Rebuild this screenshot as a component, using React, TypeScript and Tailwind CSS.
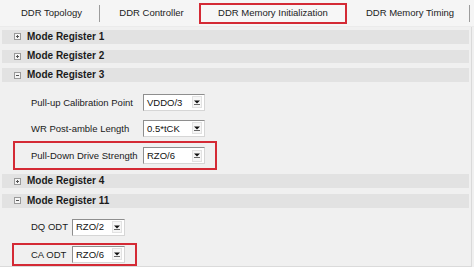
import React from "react";

const font = { fontFamily: '"Liberation Sans", Arial, sans-serif' };

const Expander = ({ open }: { open: boolean }) => (
  <svg width="7" height="7" viewBox="0 0 7 7" className="shrink-0">
    <rect x="0.5" y="0.5" width="6" height="6" fill="#f4f4f4" stroke="#9a9a9a" />
    <path d="M2 3.5H5" stroke="#555" />
    {!open && <path d="M3.5 2V5" stroke="#555" />}
  </svg>
);

const Header = ({ title, open, mt }: { title: string; open: boolean; mt: string }) => (
  <div className={`flex items-center h-[14px] ml-[2px] mr-[2px] bg-[#e2e2e2] ${mt}`}>
    <div className="w-[25px] flex justify-center pl-[6px]">
      <Expander open={open} />
    </div>
    <span className="text-[10px] font-bold text-[#1b1b1b] leading-none">{title}</span>
  </div>
);

const Combo = ({ value, w }: { value: string; w: string }) => (
  <div
    className={`flex items-center h-[17px] ${w} bg-white border border-t-[#8e8e8e] border-l-[#8e8e8e] border-r-[#d6d6d6] border-b-[#d6d6d6]`}
  >
    <span className="flex-1 pl-[3px] text-[9.5px] text-[#111] leading-none">{value}</span>
    <div className="w-[10px] h-[12px] mr-[2px] flex flex-col items-center justify-center bg-[#f6f6f6] border border-[#e2e2e2]">
      <svg width="6" height="5" viewBox="0 0 6 5">
        <path d="M0 0.5H6L3 3.5Z" fill="#111" />
        <path d="M0 4.5H6" stroke="#444" strokeWidth="0.8" />
      </svg>
    </div>
  </div>
);

const Row = ({ label, value, labelW, comboW }: { label: string; value: string; labelW: string; comboW: string }) => (
  <div className="flex items-center h-[17px]">
    <span className={`${labelW} text-[9.5px] text-[#1a1a1a] leading-none whitespace-nowrap`}>{label}</span>
    <Combo value={value} w={comboW} />
  </div>
);

const tabs = [
  { name: "DDR Topology", w: "w-[100px]", sep: true },
  { name: "DDR Controller", w: "w-[99px]", sep: false },
  { name: "DDR Memory Initialization", w: "w-[148px]", active: true, sep: false },
  { name: "DDR Memory Timing", w: "w-[123px]", sep: true },
];

export default function App() {
  return (
    <div className="w-[474px] h-[267px] overflow-hidden bg-[#f0f0f0]" style={font}>
      {/* tab strip */}
      <div className="flex h-[27px] bg-[#f5f5f5] border-b border-[#ebebeb]">
        {tabs.map((t) => (
          <div key={t.name} className={`relative flex items-center ${t.w}`}>
            {t.active ? (
              <div className="flex items-center justify-center w-full h-[21px] mt-[1px] border-2 border-[#d42a35] bg-[#f7f7f7]">
                <span className="text-[9.5px] text-[#222]">{t.name}</span>
              </div>
            ) : (
              <span className="flex-1 text-center text-[9.5px] text-[#222] pl-[4px]">{t.name}</span>
            )}
            {t.sep && <div className="w-[1px] h-[17px] bg-[#9c9c9c]" />}
          </div>
        ))}
      </div>

      {/* panel */}
      <div className="h-[240px] mr-[2px] border-r border-b border-[#dadada] flex flex-col">
        <Header title="Mode Register 1" open={false} mt="mt-[3px]" />
        <Header title="Mode Register 2" open={false} mt="mt-[6px]" />
        <Header title="Mode Register 3" open={true} mt="mt-[5px]" />

        <div className="flex flex-col pl-[31px] mt-[12px] gap-[9px]">
          <Row label="Pull-up Calibration Point" value="VDDO/3" labelW="w-[112px]" comboW="w-[62px]" />
          <Row label="WR Post-amble Length" value="0.5*tCK" labelW="w-[112px]" comboW="w-[62px]" />
        </div>
        <div className="ml-[13px] mt-[4px] w-[204px] h-[30px] border-2 border-[#d42a35] flex items-center pl-[16px]">
          <Row label="Pull-Down Drive Strength" value="RZO/6" labelW="w-[112px]" comboW="w-[62px]" />
        </div>

        <Header title="Mode Register 4" open={false} mt="mt-[4px]" />
        <Header title="Mode Register 11" open={true} mt="mt-[6px]" />

        <div className="pl-[31px] mt-[11px]">
          <Row label="DQ ODT" value="RZO/2" labelW="w-[41px]" comboW="w-[53px]" />
        </div>
        <div className="ml-[12px] mt-[7px] w-[125px] h-[24px] border-2 border-[#d42a35] flex items-center pl-[17px]">
          <Row label="CA ODT" value="RZO/6" labelW="w-[41px]" comboW="w-[53px]" />
        </div>
      </div>
    </div>
  );
}
